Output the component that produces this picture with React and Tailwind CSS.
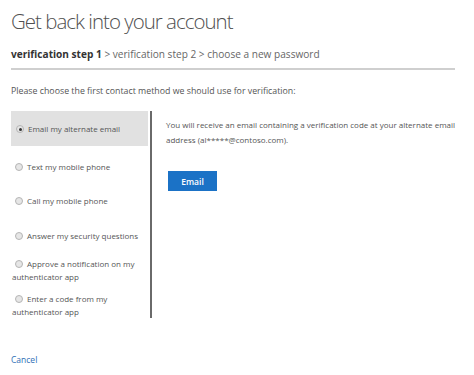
const options = [
  { label: 'Email my alternate email', selected: true },
  { label: 'Text my mobile phone' },
  { label: 'Call my mobile phone' },
  { label: 'Answer my security questions' },
  { label: 'Approve a notification on my authenticator app' },
  { label: 'Enter a code from my authenticator app' },
]

// vertical gap before each option's first line (px), tuned to reference
const gaps = ['mt-0', 'mt-[14px]', 'mt-[21px]', 'mt-[22px]', 'mt-[15px]', 'mt-[9px]']

function Radio({ checked }) {
  return (
    <span className="inline-block align-[-1px] ml-[3px] mr-[4px] w-[8px] h-[8px] rounded-full border border-[#b5b5b5] bg-[#e6e6e6] relative">
      {checked && <span className="absolute left-[1.5px] top-[1.5px] w-[3px] h-[3px] rounded-full bg-[#333]" />}
    </span>
  )
}

export default function App() {
  return (
    <div className="w-[474px] h-[375px] bg-white pl-[11px] text-[#555]" style={{ fontFamily: '"Open Sans", "Noto Sans", sans-serif' }}>
      <div className="w-[458px]">
        <h1 className="pt-[7px] text-[20.5px] leading-[28px] font-light tracking-[-1px] text-[#505050]">Get back into your account</h1>
        <div className="mt-[12px] text-[10.1px] leading-[14px] text-[#666]">
          <span className="font-bold text-[#333]">verification step 1</span> &gt; verification step 2 &gt; choose a new password
        </div>
        <div className="mt-[7px] w-[444px] h-[2px] bg-[#cfcfcf]" />
        <p className="mt-[15px] text-[8.8px] leading-[12px] text-[#555]">
          Please choose the first contact method we should use for verification:
        </p>
        <div className="mt-[14px] flex">
          <div className="w-[141px] pl-[1px] border-r-2 border-[#6a6a6a] text-[8px] leading-[13px]">
            {options.map((o, i) => (
              <div
                key={o.label}
                className={o.selected ? 'h-[35px] pt-[11px] -ml-[1px] pl-[2px] bg-[#e1e1e1] mr-[2px]' : gaps[i] + ' pr-[6px]'}
              >
                <Radio checked={o.selected} />
                {o.label}
              </div>
            ))}
          </div>
          <div className="flex-1 pl-[14px] pt-[6px] text-[8px] leading-[15px] text-[#555]">
            <p>
              You will receive an email containing a verification code at your alternate email address (al*****@contoso.com).
            </p>
            <button className="mt-[24px] ml-[2px] w-[49px] h-[20px] bg-[#1b72c6] text-white text-[8.5px] font-semibold">Email</button>
          </div>
        </div>
        <a href="#" className="block mt-[36px] text-[8.5px] text-[#2f6fb6]">Cancel</a>
      </div>
    </div>
  )
}
